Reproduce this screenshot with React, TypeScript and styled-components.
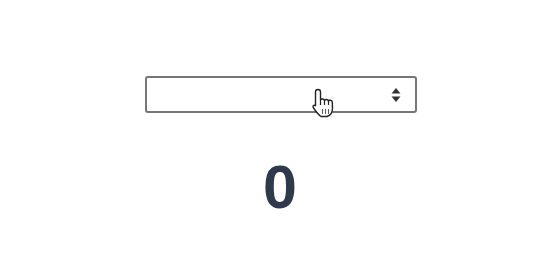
import React, { useState } from 'react';
import styled, { createGlobalStyle } from 'styled-components';

const GlobalStyle = createGlobalStyle`
  html, body {
    margin: 0;
    padding: 0;
    background: #ffffff;
    font-family: 'Liberation Sans', Arial, sans-serif;
  }
`;

const App = (): JSX.Element => {
  const [value] = useState<number>(0);

  return (
    <>
      <GlobalStyle />
      <StyledLayout>
        <SelectBox>
          <Spinner width="12" height="20" viewBox="0 0 12 20">
            <path d="M6 3 L10.5 8.5 L1.5 8.5 Z" fill="#333" />
            <path d="M6 17 L10.5 11.5 L1.5 11.5 Z" fill="#333" />
          </Spinner>
          <Cursor width="28" height="32" viewBox="0 0 28 32">
            <path
              d="M8 2.5 C9.6 2.5 10.5 3.6 10.5 5 L10.5 13 C11 11.6 14 11.6 14.5 13.5 C15 12 18 12 18.5 14 C19 12.8 22 13 22.3 15 L22.5 21 C22.5 25 20.5 28.5 17 29.5 L11 29.5 C8.5 28 6 24.5 3.5 21 C2.3 19.3 3.5 17.5 5.3 18.5 L5.5 18.7 L5.5 5 C5.5 3.6 6.4 2.5 8 2.5 Z"
              fill="#fff"
              stroke="#222"
              strokeWidth="1.4"
              strokeLinejoin="round"
            />
            <path d="M10.5 13 L10.5 18 M14.5 13.5 L14.5 18 M18.5 14 L18.5 18" stroke="#222" strokeWidth="1.2" />
            <path d="M12.5 22 L12.5 27 M15.5 22 L15.5 27 M18.5 22 L18.5 27" stroke="#555" strokeWidth="1" />
          </Cursor>
        </SelectBox>
        <Counter>{value}</Counter>
      </StyledLayout>
    </>
  );
};

const StyledLayout = styled.div`
  display: flex;
  flex-direction: column;
  align-items: center;
  width: 560px;
  height: 280px;
  padding-top: 76px;
  box-sizing: border-box;
`;

const SelectBox = styled.div`
  position: relative;
  width: 272px;
  height: 37px;
  margin-left: 2px;
  box-sizing: border-box;
  border: 2px solid #767676;
  border-radius: 3px;
  background: #fff;
  display: flex;
  align-items: center;
  justify-content: flex-end;
  padding-right: 13px;
`;

const Spinner = styled.svg`
  display: block;
`;

const Cursor = styled.svg`
  position: absolute;
  left: 163px;
  top: 9px;
`;

const Counter = styled.div`
  margin-top: 44px;
  font-size: 61px;
  font-weight: 700;
  line-height: 1;
  color: #2e3a4c;
`;

export default App;
